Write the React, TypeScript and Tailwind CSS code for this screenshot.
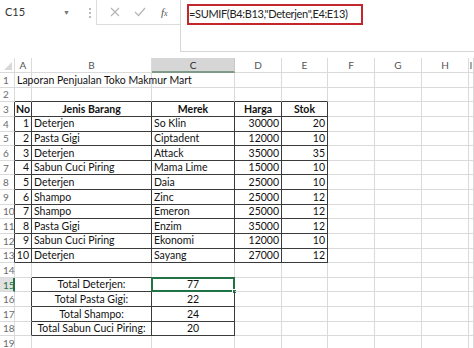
import React from "react";

type Align = "l" | "r" | "c";
type CellData = { t?: string; a?: Align; b?: boolean };

const GRID = "grid grid-cols-[15px_17px_120px_83px_47px_46px_47px_47px_47px_1fr]";
const LETTERS = ["A", "B", "C", "D", "E", "F", "G", "H", "I"];

const items: [string, string, string, string][] = [
  ["Deterjen", "So Klin", "30000", "20"],
  ["Pasta Gigi", "Ciptadent", "12000", "10"],
  ["Deterjen", "Attack", "35000", "35"],
  ["Sabun Cuci Piring", "Mama Lime", "15000", "10"],
  ["Deterjen", "Daia", "25000", "10"],
  ["Shampo", "Zinc", "25000", "12"],
  ["Shampo", "Emeron", "25000", "12"],
  ["Pasta Gigi", "Enzim", "35000", "12"],
  ["Sabun Cuci Piring", "Ekonomi", "12000", "10"],
  ["Deterjen", "Sayang", "27000", "12"],
];

const totals: [string, string][] = [
  ["Total Deterjen:", "77"],
  ["Total Pasta Gigi:", "22"],
  ["Total Shampo:", "24"],
  ["Total Sabun Cuci Piring:", "20"],
];

function rowCells(r: number): CellData[] {
  const cells: CellData[] = Array.from({ length: 9 }, () => ({}));
  if (r === 1) cells[0] = { t: "Laporan Penjualan Toko Makmur Mart", a: "l" };
  if (r === 3) {
    cells[0] = { t: "No", a: "c", b: true };
    cells[1] = { t: "Jenis Barang", a: "c", b: true };
    cells[2] = { t: "Merek", a: "c", b: true };
    cells[3] = { t: "Harga", a: "c", b: true };
    cells[4] = { t: "Stok", a: "c", b: true };
  }
  if (r >= 4 && r <= 13) {
    const it = items[r - 4];
    cells[0] = { t: String(r - 3), a: "r" };
    cells[1] = { t: it[0], a: "l" };
    cells[2] = { t: it[1], a: "l" };
    cells[3] = { t: it[2], a: "r" };
    cells[4] = { t: it[3], a: "r" };
  }
  if (r >= 15 && r <= 18) {
    const tt = totals[r - 15];
    cells[1] = { t: tt[0], a: "c" };
    cells[2] = { t: tt[1], a: "c" };
  }
  return cells;
}

// c: 0 = row header, 1..9 = A..I
function rightDark(r: number, c: number) {
  if (r >= 3 && r <= 13 && c >= 0 && c <= 5) return true;
  if (r >= 15 && r <= 18 && c >= 1 && c <= 3) return true;
  return false;
}
function bottomDark(r: number, c: number) {
  if (r >= 2 && r <= 13 && c >= 1 && c <= 5) return true;
  if (r >= 14 && r <= 18 && c >= 2 && c <= 3) return true;
  return false;
}

function Row({ r }: { r: number }) {
  const cells = rowCells(r);
  const sel = r === 15;
  return (
    <div className={`${GRID} h-[14.63px]`}>
      <div
        className={`relative flex items-center pl-[3px] text-[10px] leading-none border-b border-b-[#dadada] ${
          sel
            ? "bg-[#e1e1e1] text-[#217346] border-r-2 border-r-[#217346]"
            : rightDark(r, 0)
            ? "text-[#6b6b6b] border-r border-r-[#3a3a3a]"
            : "text-[#6b6b6b] border-r border-r-[#dadada]"
        }`}
      >
        {r}
      </div>
      {cells.map((cell, i) => {
        const c = i + 1;
        const rd = rightDark(r, c);
        const bd = bottomDark(r, c);
        const align =
          cell.a === "r" ? "justify-end pr-[2px]" : cell.a === "c" ? "justify-center" : "justify-start pl-[2px]";
        return (
          <div
            key={c}
            className={`relative flex items-center whitespace-nowrap text-[10.5px] leading-none text-[#111] ${align} border-r border-b ${
              rd ? "border-r-[#3a3a3a]" : "border-r-[#dadada]"
            } ${bd ? "border-b-[#3a3a3a]" : "border-b-[#dadada]"} ${cell.b ? "font-bold" : ""} ${
              r === 1 && c === 1 ? "overflow-visible z-10" : ""
            }`}
          >
            <span className={r === 1 ? "absolute left-[2px] top-1/2 -translate-y-1/2" : ""}>{cell.t}</span>
            {sel && c === 3 && (
              <div className="absolute -left-[1px] -top-[1px] -right-[1px] -bottom-[1px] border-2 border-[#217346] pointer-events-none">
                <div className="absolute -right-[4px] -bottom-[4px] w-[5px] h-[5px] bg-[#217346] border border-white" />
              </div>
            )}
          </div>
        );
      })}
    </div>
  );
}

export default function App() {
  return (
    <div className="w-[474px] h-[348px] overflow-hidden bg-white font-['Lato',sans-serif] text-black">
      {/* Top bar */}
      <div className="flex h-[52px]">
        <div className="w-[180px] flex items-start">
          <div className="flex h-[25px] w-[84px] items-center justify-between pl-[5px] pr-[14px]">
            <span className="text-[11px] text-[#333]">C15</span>
            <span className="text-[7px] text-[#777]">▼</span>
          </div>
          <div className="flex h-[25px] w-[12px] flex-col items-center justify-center gap-[2px]">
            <span className="w-[2px] h-[2px] bg-[#bbb]" />
            <span className="w-[2px] h-[2px] bg-[#bbb]" />
            <span className="w-[2px] h-[2px] bg-[#bbb]" />
          </div>
          <div className="flex h-[25px] flex-1 items-center border border-t-0 border-r-0 border-[#dcdcdc] ml-[0px]">
            <svg width="10" height="10" viewBox="0 0 10 10" className="ml-[13px]">
              <path d="M1 1 L9 9 M9 1 L1 9" stroke="#b5b5b5" strokeWidth="1.2" fill="none" />
            </svg>
            <svg width="12" height="10" viewBox="0 0 12 10" className="ml-[14px]">
              <path d="M1 5 L4.5 8.5 L11 1" stroke="#b5b5b5" strokeWidth="1.2" fill="none" />
            </svg>
            <span className="ml-[15px] font-['Liberation_Serif',serif] italic text-[11px] text-[#555]">
              f<span className="text-[8px]">x</span>
            </span>
          </div>
        </div>
        <div className="flex-1 border-l border-b border-[#d6d6d6] pt-[4px] pl-[6px]">
          <div className="flex h-[21px] w-[176px] items-center border-2 border-[#c3272e] text-[11px] tracking-[-0.35px] text-[#222] whitespace-nowrap">
            =SUMIF(B4:B13,"Deterjen",E4:E13)
          </div>
        </div>
      </div>
      <div className="h-[6px]" />
      {/* Column header */}
      <div className={`${GRID} h-[15px]`}>
        <div className="relative border-r border-b border-[#dadada]">
          <svg width="8" height="8" viewBox="0 0 8 8" className="absolute right-[2px] bottom-[2px]">
            <path d="M8 0 L8 8 L0 8 Z" fill="#d8d8d8" />
          </svg>
        </div>
        {LETTERS.map((L) => (
          <div
            key={L}
            className={`flex items-center justify-center text-[10px] leading-none border-r ${
              L === "C"
                ? "bg-[#d6d6d6] text-[#2a2a2a] border-r-[#c8c8c8] border-b-2 border-b-[#7f9a86]"
                : "text-[#555] border-r-[#dadada] border-b border-b-[#dadada]"
            }`}
          >
            {L}
          </div>
        ))}
      </div>
      {Array.from({ length: 19 }, (_, i) => (
        <Row key={i + 1} r={i + 1} />
      ))}
    </div>
  );
}
